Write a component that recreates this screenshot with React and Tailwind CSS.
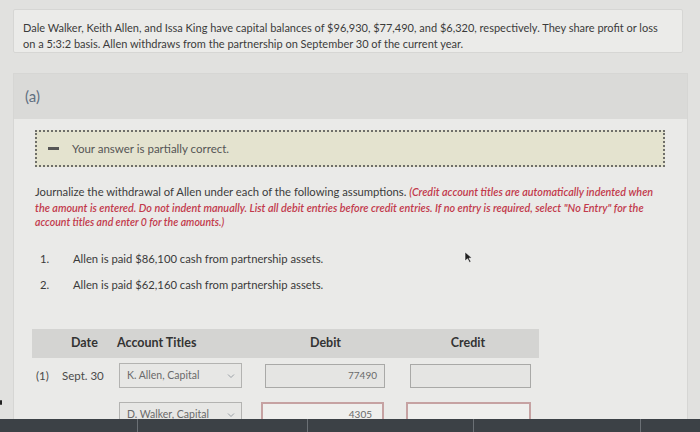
import React from "react";

const font = { fontFamily: "Lato, 'Open Sans', sans-serif" };

function Chevron() {
  return (
    <svg width="8" height="6" viewBox="0 0 8 6" className="shrink-0">
      <path d="M1 1.5 L4 4.5 L7 1.5" fill="none" stroke="#9aa0a6" strokeWidth="1" />
    </svg>
  );
}

function SelectBox({ label }) {
  return (
    <div className="ml-[4px] flex h-[25px] w-[123px] items-center justify-between border border-[#b3b3b1] bg-[#e7e7e5] pl-[7px] pr-[6px] text-[10.5px] text-[#6a6a6a]">
      <span>{label}</span>
      <Chevron />
    </div>
  );
}

export default function App() {
  return (
    <div
      className="relative flex h-[432px] w-[700px] flex-col overflow-hidden bg-[#e1e1df] text-[#3a3a3a]"
      style={font}
    >
      <div className="flex min-h-0 flex-1 flex-col overflow-hidden pl-[13px] pr-[13px]">
        {/* Top problem card */}
        <div className="mt-[9px] h-[52px] w-[670px] rounded-[2px] border border-[#d6d6d4] bg-[#ebebe9] pl-[9px] pt-[10px] text-[11px] leading-[16px] text-[#3b3b3b]">
          <p>
            Dale Walker, Keith Allen, and Issa King have capital balances of $96,930, $77,490, and $6,320, respectively. They share profit or loss
          </p>
          <p>on a 5:3:2 basis. Allen withdraws from the partnership on September 30 of the current year.</p>
        </div>

        {/* Panel */}
        <div className="mt-[20px] flex w-[675px] flex-1 flex-col border border-b-0 border-[#d6d6d4] bg-[#eaeae8]">
          <div className="flex h-[45px] items-center bg-[#dadad8] pl-[11px] text-[15px] text-[#5f6f80]">
            (a)
          </div>

          <div className="flex flex-col pl-[21px]">
            <div className="mt-[11px] flex h-[37px] w-[630px] items-center border-2 border-dotted border-[#6f6f6a] bg-[#e4e3cf]">
              <div className="ml-[11px] h-[3px] w-[11px] bg-[#555555]" />
              <span className="ml-[13px] text-[11.5px] text-[#555555]">Your answer is partially correct.</span>
            </div>

            <div className="mt-[17px] flex w-[640px] flex-col text-[11.25px] leading-[15.5px]">
              <p className="whitespace-nowrap">
                <span className="text-[#3b3b3b]">Journalize the withdrawal of Allen under each of the following assumptions. </span>
                <span className="text-[10.8px] font-semibold italic text-[#c23a4c]">(Credit account titles are automatically indented when</span>
              </p>
              <p className="whitespace-nowrap text-[10.8px] font-semibold italic text-[#c23a4c]">
                the amount is entered. Do not indent manually. List all debit entries before credit entries. If no entry is required, select "No Entry" for the
              </p>
              <p className="whitespace-nowrap text-[10.5px] font-semibold italic text-[#c23a4c]">
                account titles and enter 0 for the amounts.)
              </p>
            </div>

            <div className="mt-[20px] flex flex-col gap-[10.5px] text-[11.25px] leading-[15.5px]">
              <div className="flex">
                <span className="ml-[5px] w-[33px]">1.</span>
                <span>Allen is paid $86,100 cash from partnership assets.</span>
              </div>
              <div className="flex">
                <span className="ml-[5px] w-[33px]">2.</span>
                <span>Allen is paid $62,160 cash from partnership assets.</span>
              </div>
            </div>

            {/* Table */}
            <div className="-ml-[3px] mt-[37px] flex flex-col">
              <div className="flex h-[29px] w-[507px] items-center bg-[#d4d4d2] text-[12.5px] font-bold text-[#333333]">
                <div className="w-[83px] pl-[39px]">Date</div>
                <div className="w-[139px] pl-[2px]">Account Titles</div>
                <div className="w-[143px] text-center">Debit</div>
                <div className="w-[142px] text-center">Credit</div>
              </div>

              <div className="mt-[5px] flex h-[25px] items-center text-[11.5px]">
                <div className="flex w-[83px] text-[#4a4a4a]">
                  <span className="ml-[4px] w-[26px]">(1)</span>
                  <span>Sept. 30</span>
                </div>
                <div className="w-[139px]">
                  <SelectBox label="K. Allen, Capital" />
                </div>
                <div className="w-[143px]">
                  <div className="ml-[11px] flex h-[24px] w-[120px] items-center justify-end border border-[#a9a9a7] bg-[#e5e5e3] pr-[7px] text-[10px] text-[#6a6a6a]">
                    77490
                  </div>
                </div>
                <div className="w-[142px]">
                  <div className="ml-[13px] h-[24px] w-[121px] border border-[#a9a9a7] bg-[#e5e5e3]" />
                </div>
              </div>

              <div className="mt-[14px] flex h-[25px] items-start text-[10px]">
                <div className="w-[83px]" />
                <div className="w-[139px]">
                  <SelectBox label="D. Walker, Capital" />
                </div>
                <div className="w-[143px]">
                  <div className="ml-[7px] flex h-[24px] w-[123px] items-center justify-end border-2 border-[#c6a2a2] bg-[#efefed] pr-[10px] text-[10px] text-[#6a6a6a]">
                    4305
                  </div>
                </div>
                <div className="w-[142px]">
                  <div className="ml-[9px] h-[24px] w-[125px] border-2 border-[#c6a2a2] bg-[#efefed]" />
                </div>
              </div>
            </div>
          </div>
        </div>
      </div>

      {/* bottom dark bar */}
      <div className="flex h-[13px] w-full shrink-0 bg-[#3c4146]">
        <div className="ml-[137px] h-full w-px bg-[#6b7075]" />
        <div className="ml-[169px] h-full w-px bg-[#6b7075]" />
        <div className="ml-[165px] h-full w-px bg-[#6b7075]" />
        <div className="ml-[166px] h-full w-px bg-[#6b7075]" />
      </div>

      {/* mouse cursor */}
      <svg className="absolute left-[464px] top-[251px]" width="9" height="12" viewBox="0 0 9 12">
        <path d="M1 1 L1 10 L3.5 7.8 L5.5 11.5 L7 10.8 L5 7.2 L8 7 Z" fill="#222" stroke="#fff" strokeWidth="0.6" />
      </svg>
      {/* stray dark mark on left edge */}
      <div className="absolute left-0 top-[400px] h-[5px] w-[2px] rounded-full bg-[#222]" />
    </div>
  );
}
